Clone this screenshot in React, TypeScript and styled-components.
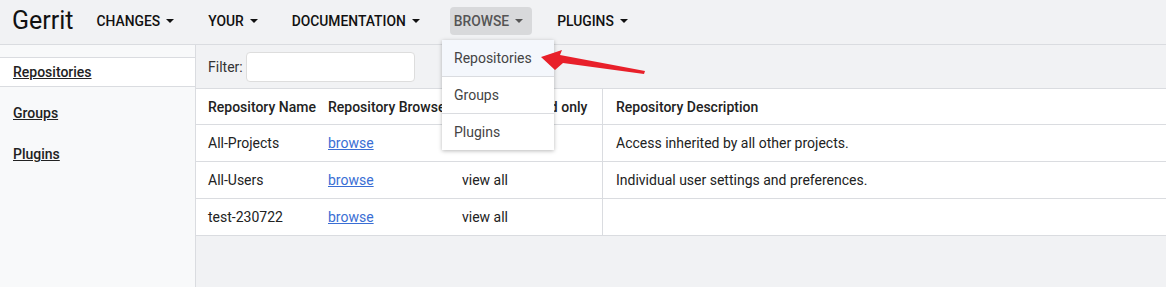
import * as React from "react";
import styled, { createGlobalStyle } from "styled-components";

const GlobalStyle = createGlobalStyle`
  html, body {
    margin: 0;
    padding: 0;
    background: #f1f2f4;
  }
  body {
    font-family: Roboto, "Liberation Sans", sans-serif;
    font-size: 14px;
    color: #212121;
  }
`;

const Page = styled.div`
  position: relative;
  width: 1166px;
  height: 287px;
  overflow: hidden;
  display: flex;
  flex-direction: column;
  background: #f1f2f4;
`;

const Header = styled.header`
  height: 44px;
  flex: none;
  display: flex;
  align-items: center;
  padding-left: 12px;
  border-bottom: 1px solid #dadce0;
  background: #f1f2f4;
`;

const Logo = styled.div`
  font-size: 25px;
  color: #111;
  margin-right: 19px;
  margin-top: -4px;
`;

const Nav = styled.nav`
  display: flex;
  align-items: center;
  gap: 21px;
`;

const NavItem = styled.div<{ $active?: boolean }>`
  display: flex;
  align-items: center;
  height: 28px;
  padding: 0 9px 0 4px;
  border-radius: 4px;
  font-size: 13.85px;
  font-weight: 500;
  color: ${(p) => (p.$active ? "#555" : "#111")};
  background: ${(p) => (p.$active ? "#d8d9db" : "transparent")};
  margin-top: -2px;
`;

const Caret = styled.span`
  width: 0;
  height: 0;
  margin-left: 6px;
  border-left: 4px solid transparent;
  border-right: 4px solid transparent;
  border-top: 4px solid currentColor;
`;

const Body = styled.div`
  flex: 1;
  display: flex;
  min-height: 0;
`;

const Sidebar = styled.aside`
  width: 195px;
  flex: none;
  border-right: 1px solid #dadce0;
  background: #f8f9fa;
  padding-top: 12px;
`;

const SideItem = styled.div<{ $selected?: boolean }>`
  height: 28px;
  display: flex;
  align-items: center;
  padding-left: 13px;
  margin-bottom: 11px;
  background: ${(p) => (p.$selected ? "#fff" : "transparent")};
  border-top: 1px solid ${(p) => (p.$selected ? "#dadce0" : "transparent")};
  border-bottom: 1px solid ${(p) => (p.$selected ? "#dadce0" : "transparent")};

  a {
    color: #222;
    font-weight: 500;
    text-decoration: underline;
  }
`;

const Main = styled.main`
  flex: 1;
  display: flex;
  flex-direction: column;
`;

const FilterBar = styled.div`
  height: 43px;
  display: flex;
  align-items: center;
  padding-left: 12px;
  gap: 3px;
  color: #333;
`;

const FilterInput = styled.div`
  width: 167px;
  height: 28px;
  background: #fff;
  border: 1px solid #ddd;
  border-radius: 4px;
  margin-top: 1px;
`;

const Table = styled.div`
  background: #fff;
  border-top: 1px solid #dadce0;
`;

const Row = styled.div<{ $head?: boolean }>`
  display: grid;
  grid-template-columns: 120px 134px 64px 88px 1fr;
  height: ${(p) => (p.$head ? "35px" : "36px")};
  border-bottom: 1px solid #dadce0;
  font-weight: ${(p) => (p.$head ? 500 : 400)};
  color: #222;
`;

const Cell = styled.div<{ $desc?: boolean }>`
  display: flex;
  align-items: center;
  white-space: nowrap;
  padding-left: ${(p) => (p.$desc ? "13px" : "12px")};
  border-left: ${(p) => (p.$desc ? "1px solid #dadce0" : "none")};

  a {
    color: #3a6ed4;
    text-decoration: underline;
  }
`;

const Menu = styled.div`
  position: absolute;
  left: 442px;
  top: 40px;
  width: 112px;
  background: #fff;
  box-shadow: 0 1px 4px rgba(0, 0, 0, 0.28);
  z-index: 5;
`;

const MenuItem = styled.div<{ $hover?: boolean }>`
  height: 36px;
  display: flex;
  align-items: center;
  padding-left: 12px;
  color: #444;
  background: ${(p) => (p.$hover ? "#f4f7fc" : "#fff")};
  & + & {
    border-top: 1px solid #dadce0;
  }
`;

const Arrow = styled.svg`
  position: absolute;
  left: 530px;
  top: 40px;
  z-index: 6;
`;

const repos = [
  { name: "All-Projects", desc: "Access inherited by all other projects.", changes: "" },
  { name: "All-Users", desc: "Individual user settings and preferences.", changes: "view all" },
  { name: "test-230722", desc: "", changes: "view all" },
];

const App: React.FC = () => {
  return (
    <Page>
      <GlobalStyle />
      <Header>
        <Logo>Gerrit</Logo>
        <Nav>
          {["CHANGES", "YOUR", "DOCUMENTATION", "BROWSE", "PLUGINS"].map((n) => (
            <NavItem key={n} $active={n === "BROWSE"}>
              {n}
              <Caret />
            </NavItem>
          ))}
        </Nav>
      </Header>
      <Body>
        <Sidebar>
          <SideItem $selected>
            <a>Repositories</a>
          </SideItem>
          <SideItem>
            <a>Groups</a>
          </SideItem>
          <SideItem>
            <a>Plugins</a>
          </SideItem>
        </Sidebar>
        <Main>
          <FilterBar>
            Filter:
            <FilterInput />
          </FilterBar>
          <Table>
            <Row $head>
              <Cell>Repository Name</Cell>
              <Cell>Repository Browser</Cell>
              <Cell>Changes</Cell>
              <Cell>Read only</Cell>
              <Cell $desc>Repository Description</Cell>
            </Row>
            {repos.map((r) => (
              <Row key={r.name}>
                <Cell>{r.name}</Cell>
                <Cell>
                  <a>browse</a>
                </Cell>
                <Cell>{r.changes}</Cell>
                <Cell />
                <Cell $desc>{r.desc}</Cell>
              </Row>
            ))}
          </Table>
        </Main>
      </Body>
      <Menu>
        <MenuItem $hover>Repositories</MenuItem>
        <MenuItem>Groups</MenuItem>
        <MenuItem>Plugins</MenuItem>
      </Menu>
      <Arrow width="125" height="45" viewBox="0 0 125 45">
        <polygon
          points="11,17 32,10 30,15 115,31 114,34 33,23 25,30"
          fill="#e8202a"
        />
      </Arrow>
    </Page>
  );
};

export default App;
